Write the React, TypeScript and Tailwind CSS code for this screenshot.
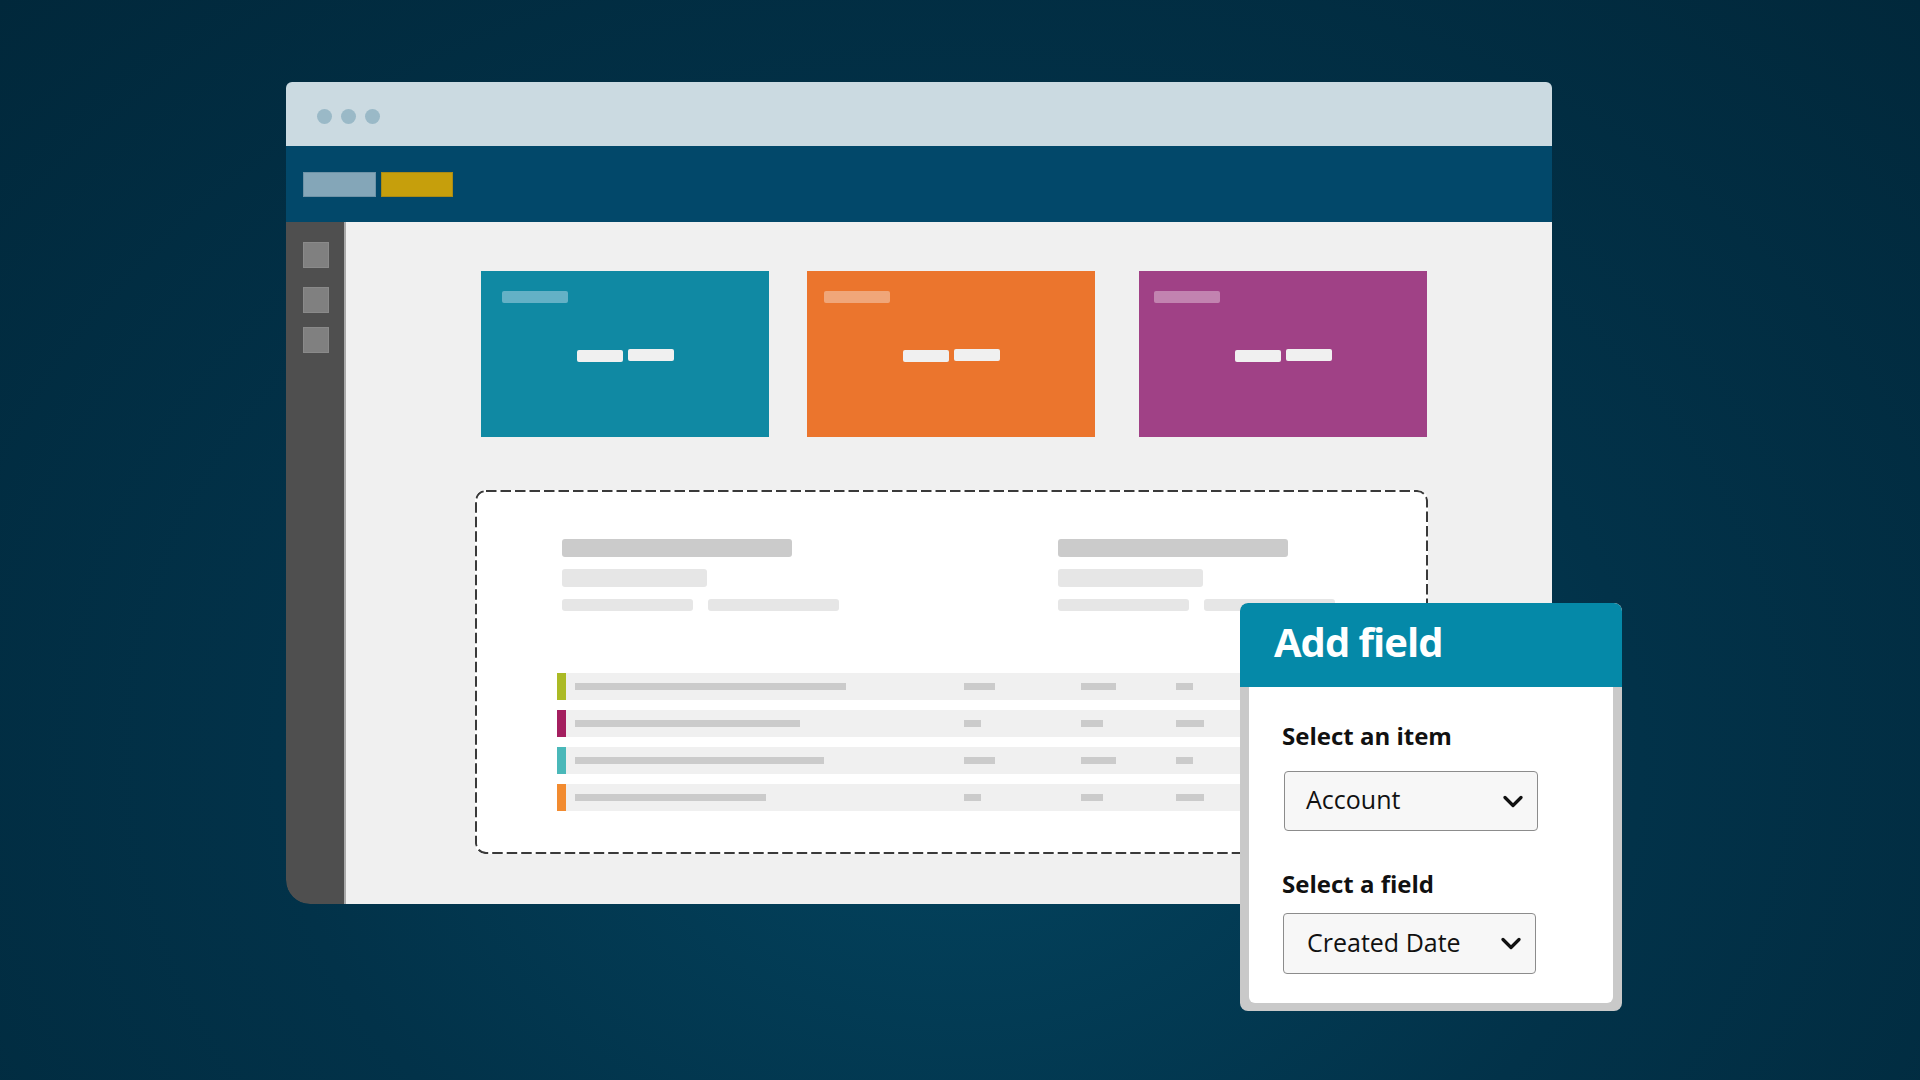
import React from "react";

const Card = ({
  bg,
  label,
  labelMl,
  className,
}: {
  bg: string;
  label: string;
  labelMl: string;
  className?: string;
}) => (
  <div className={`w-[288px] h-[166px] shrink-0 flex flex-col ${bg} ${className ?? ""}`}>
    <div className={`mt-[20px] w-[66px] h-[12px] rounded-[2px] ${label} ${labelMl}`} />
    <div className="mt-[46px] flex justify-center items-start gap-[5px]">
      <div className="mt-[1px] w-[46px] h-[12px] rounded-[2px] bg-[#f0f0f0]" />
      <div className="w-[46px] h-[12px] rounded-[2px] bg-[#f0f0f0]" />
    </div>
  </div>
);

const SkeletonCol = () => (
  <div className="flex flex-col w-[496px] shrink-0">
    <div className="w-[230px] h-[18px] rounded-[3px] bg-[#cbcbcb]" />
    <div className="mt-[12px] w-[145px] h-[18px] rounded-[3px] bg-[#e6e6e6]" />
    <div className="mt-[12px] flex gap-[15px]">
      <div className="w-[131px] h-[12px] rounded-[3px] bg-[#e6e6e6]" />
      <div className="w-[131px] h-[12px] rounded-[3px] bg-[#e6e6e6]" />
    </div>
  </div>
);

const rows = [
  { color: "bg-[#abba25]", long: "w-[271px]", c1: "w-[31px]", c2: "w-[35px]", c3: "w-[17px]" },
  { color: "bg-[#a41f5f]", long: "w-[225px]", c1: "w-[17px]", c2: "w-[22px]", c3: "w-[28px]" },
  { color: "bg-[#4ab8b9]", long: "w-[249px]", c1: "w-[31px]", c2: "w-[35px]", c3: "w-[17px]" },
  { color: "bg-[#f28b30]", long: "w-[191px]", c1: "w-[17px]", c2: "w-[22px]", c3: "w-[28px]" },
];

const Chevron = () => (
  <svg width="20" height="13" viewBox="0 0 20 13" fill="none">
    <polyline
      points="2,2.5 10,10.5 18,2.5"
      stroke="#111"
      strokeWidth="3.2"
      strokeLinecap="round"
      strokeLinejoin="round"
    />
  </svg>
);

export default function App() {
  return (
    <div
      className="relative w-[1920px] h-[1080px] overflow-hidden bg-[radial-gradient(ellipse_at_50%_70%,#03445f_0%,#023249_50%,#01283b_100%)]"
      style={{ fontFamily: '"Open Sans", "Noto Sans", sans-serif' }}
    >
      <div className="pt-[82px] pl-[286px]">
        {/* Browser window */}
        <div className="w-[1266px] flex flex-col rounded-t-[6px] rounded-bl-[24px] overflow-hidden">
          {/* Title bar */}
          <div className="h-[64px] bg-[#cbdae1] flex items-start pt-[27px] pl-[31px] gap-[9px]">
            <div className="w-[15px] h-[15px] rounded-full bg-[#9ab9c7]" />
            <div className="w-[15px] h-[15px] rounded-full bg-[#9ab9c7]" />
            <div className="w-[15px] h-[15px] rounded-full bg-[#9ab9c7]" />
          </div>
          {/* Nav */}
          <div className="h-[76px] bg-[#02486a] flex items-start pt-[26px] pl-[17px] gap-[5px]">
            <div className="w-[73px] h-[25px] bg-[#84a6b8] border border-[#6e93a7]" />
            <div className="w-[72px] h-[25px] bg-[#c69f0c] border border-[#a98a16]" />
          </div>
          {/* Body */}
          <div className="h-[682px] flex">
            <div className="w-[60px] shrink-0 bg-[#4f4f4f] border-r-[2px] border-[#a9a9a9] flex flex-col pl-[17px] rounded-bl-[24px]">
              <div className="mt-[20px] w-[26px] h-[26px] bg-[#808080] border border-[#8a8a8a]" />
              <div className="mt-[19px] w-[26px] h-[26px] bg-[#808080] border border-[#8a8a8a]" />
              <div className="mt-[14px] w-[26px] h-[26px] bg-[#808080] border border-[#8a8a8a]" />
            </div>
            <div className="flex-1 bg-[#f0f0f0] pt-[49px] pl-[129px] flex flex-col">
              <div className="flex ml-[6px]">
                <Card bg="bg-[#1089a3]" label="bg-[#64b1c6]" labelMl="ml-[21px]" />
                <Card bg="bg-[#eb752d]" label="bg-[#f0a679]" labelMl="ml-[17px]" className="ml-[38px]" />
                <Card bg="bg-[#a04186]" label="bg-[#c283b0]" labelMl="ml-[15px]" className="ml-[44px]" />
              </div>
              {/* Dashed box */}
              <div className="relative mt-[53px] w-[953px] h-[364px] bg-white rounded-[10px] overflow-hidden">
                <svg className="absolute inset-0" width="953" height="364" viewBox="0 0 953 364" fill="none">
                  <rect
                    x="1"
                    y="1"
                    width="951"
                    height="362"
                    rx="10"
                    stroke="#3a3a3a"
                    strokeWidth="2"
                    strokeDasharray="10.5 4"
                  />
                </svg>
                <div className="flex pt-[49px] pl-[87px]">
                  <SkeletonCol />
                  <SkeletonCol />
                </div>
                <div className="mt-[62px] ml-[82px] flex flex-col gap-[10px]">
                  {rows.map((r, i) => (
                    <div key={i} className="flex h-[27px] w-[788px]">
                      <div className={`w-[9px] h-full shrink-0 ${r.color}`} />
                      <div className="flex-1 bg-[#f0f0f0] flex items-start pt-[10px] pl-[9px]">
                        <div className="w-[389px] shrink-0">
                          <div className={`h-[7px] bg-[#cbcbcb] ${r.long}`} />
                        </div>
                        <div className="w-[117px] shrink-0">
                          <div className={`h-[7px] bg-[#cbcbcb] ${r.c1}`} />
                        </div>
                        <div className="w-[95px] shrink-0">
                          <div className={`h-[7px] bg-[#cbcbcb] ${r.c2}`} />
                        </div>
                        <div>
                          <div className={`h-[7px] bg-[#cbcbcb] ${r.c3}`} />
                        </div>
                      </div>
                    </div>
                  ))}
                </div>
              </div>
            </div>
          </div>
        </div>
      </div>

      {/* Add field dialog */}
      <div className="absolute left-[1240px] top-[603px] w-[382px] h-[408px] rounded-[8px] bg-[#c9c9c9] flex flex-col overflow-hidden">
        <div className="h-[84px] bg-[#0589a8] rounded-t-[8px] pl-[34px] pt-[19px]">
          <div className="text-[40px] leading-[40px] font-bold text-white tracking-[-1px]">Add field</div>
        </div>
        <div className="flex-1 px-[9px] pb-[8px] flex">
          <div className="flex-1 bg-white rounded-b-[6px] flex flex-col">
            <div className="mt-[37px] ml-[33px] text-[24px] leading-[24px] font-bold text-[#111]">Select an item</div>
            <div className="mt-[23px] ml-[35px] w-[254px] h-[60px] rounded-[4px] border-[1.5px] border-[#8c8c8c] bg-[#f7f7f7] flex items-center justify-between pl-[21px] pr-[14px]">
              <span className="text-[25px] leading-[25px] font-medium text-[#111] -mt-[4px]">Account</span>
              <Chevron />
            </div>
            <div className="mt-[41px] ml-[33px] text-[24px] leading-[24px] font-bold text-[#111]">Select a field</div>
            <div className="mt-[17px] ml-[34px] w-[253px] h-[61px] rounded-[4px] border-[1.5px] border-[#8c8c8c] bg-[#f7f7f7] flex items-center justify-between pl-[23px] pr-[14px]">
              <span className="text-[25px] leading-[25px] font-medium text-[#111] -mt-[2px]">Created Date</span>
              <Chevron />
            </div>
          </div>
        </div>
      </div>
    </div>
  );
}
